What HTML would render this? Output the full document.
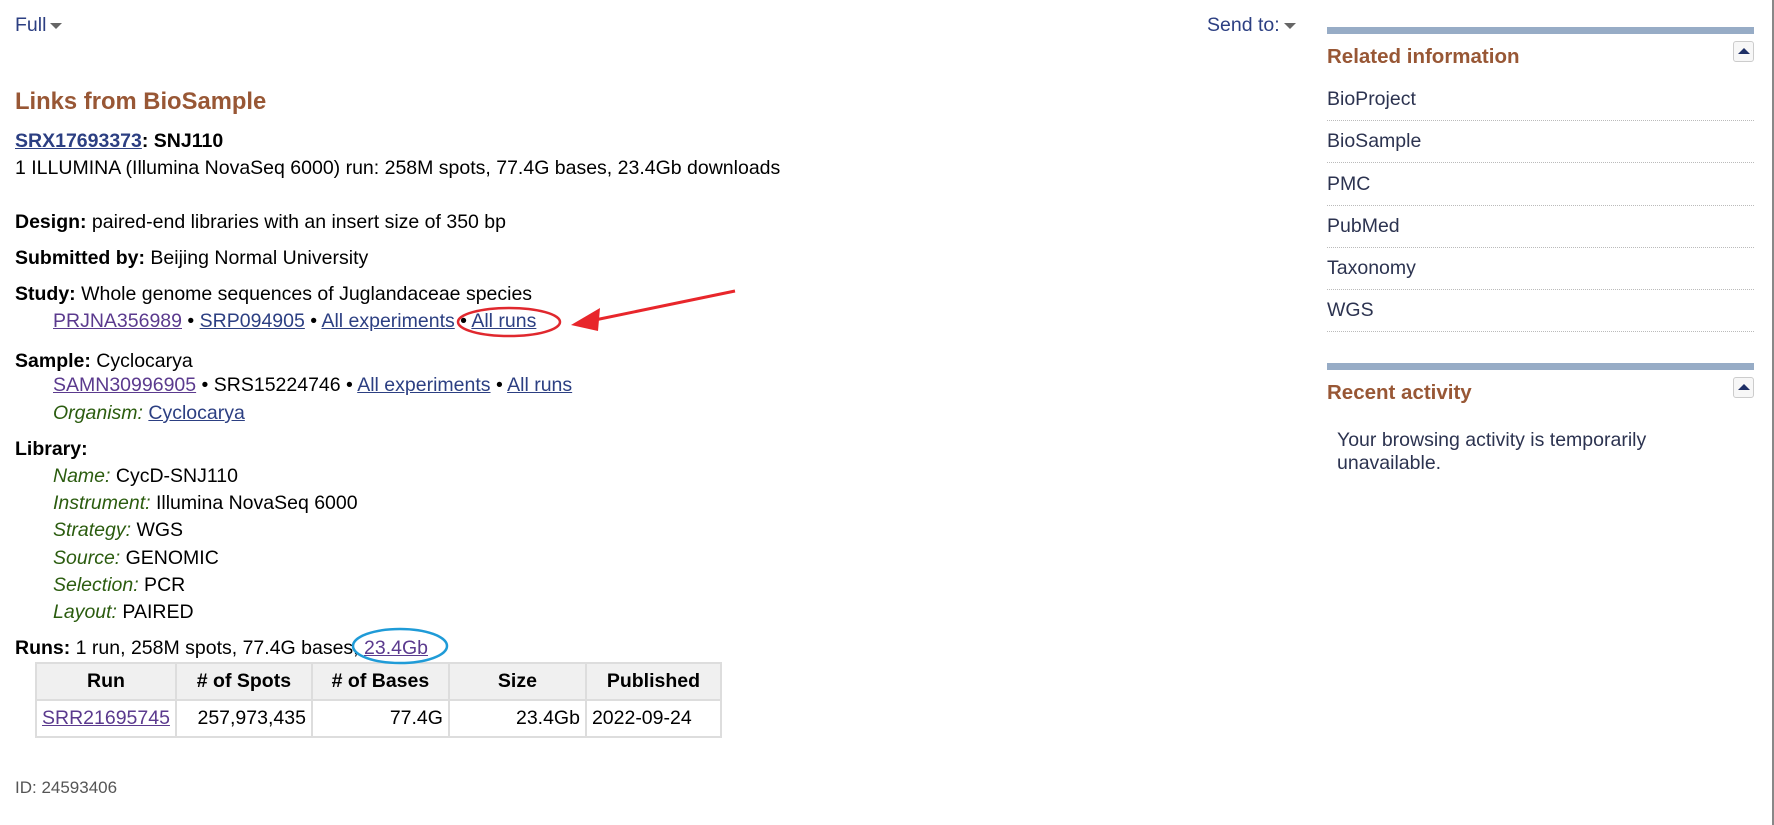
<!DOCTYPE html>
<html><head><meta charset="utf-8"><style>
*{margin:0;padding:0;box-sizing:border-box}
body{width:1774px;height:825px;background:#fff;font-family:"Liberation Sans",Arial,sans-serif;font-size:19.5px;color:#000;position:relative;overflow:hidden}
.a{position:absolute;white-space:nowrap}
a{color:#2c3f82;text-decoration:underline}
a.v{color:#5b3a8e}
.nav{color:#2c3f82}
.tri{display:inline-block;width:0;height:0;border-left:6px solid transparent;border-right:6px solid transparent;border-top:6px solid #666;vertical-align:middle;margin-left:4px}
h2{font-size:23.8px;color:#985735;font-weight:bold}
i{color:#2b5c0f}
b{font-weight:bold}
table{border-collapse:collapse;position:absolute;left:35px;top:662px}
td,th{border:2px solid #ddd;height:37px;padding:0 5px}
th{background:#f0f0f0;font-weight:bold;text-align:center}
.side{position:absolute;left:1327px;width:427px}
.bar{height:7px;background:#97acc6}
.sh{color:#985735;font-weight:bold;font-size:20.5px}
.btn{position:absolute;right:0;width:21px;height:21px;border:1px solid #ccc;border-radius:3px;background:#f7f7f7}
.btn:after{content:"";position:absolute;left:4px;top:6px;border-left:6px solid transparent;border-right:6px solid transparent;border-bottom:6px solid #1e2f66}
.item{position:absolute;left:0;width:427px;border-bottom:1px dotted #bbb;height:42px;color:#2c3350}
</style></head><body>
<div class="a nav" style="left:15px;top:14px">Full<span class="tri"></span></div>
<div class="a nav" style="left:1207px;top:14px">Send to:<span class="tri"></span></div>
<div style="position:absolute;right:0;top:0;width:2px;height:825px;background:#888"></div>

<h2 class="a" style="left:15px;top:88px">Links from BioSample</h2>
<div class="a" style="left:15px;top:130px"><b><a href="#">SRX17693373</a>: SNJ110</b></div>
<div class="a" style="left:15px;top:157px">1 ILLUMINA (Illumina NovaSeq 6000) run: 258M spots, 77.4G bases, 23.4Gb downloads</div>
<div class="a" style="left:15px;top:211px"><b>Design:</b> paired-end libraries with an insert size of 350 bp</div>
<div class="a" style="left:15px;top:247px"><b>Submitted by:</b> Beijing Normal University</div>
<div class="a" style="left:15px;top:283px"><b>Study:</b> Whole genome sequences of Juglandaceae species</div>
<div class="a" style="left:53px;top:310px"><a class="v" href="#">PRJNA356989</a> • <a href="#">SRP094905</a> • <a href="#">All experiments</a> • <a href="#">All runs</a></div>
<div class="a" style="left:15px;top:350px"><b>Sample:</b> Cyclocarya</div>
<div class="a" style="left:53px;top:374px"><a class="v" href="#">SAMN30996905</a> • SRS15224746 • <a href="#">All experiments</a> • <a href="#">All runs</a></div>
<div class="a" style="left:53px;top:402px"><i>Organism:</i> <a href="#">Cyclocarya</a></div>
<div class="a" style="left:15px;top:438px"><b>Library:</b></div>
<div class="a" style="left:53px;top:465px"><i>Name:</i> CycD-SNJ110</div>
<div class="a" style="left:53px;top:492px"><i>Instrument:</i> Illumina NovaSeq 6000</div>
<div class="a" style="left:53px;top:519px"><i>Strategy:</i> WGS</div>
<div class="a" style="left:53px;top:547px"><i>Source:</i> GENOMIC</div>
<div class="a" style="left:53px;top:574px"><i>Selection:</i> PCR</div>
<div class="a" style="left:53px;top:601px"><i>Layout:</i> PAIRED</div>
<div class="a" style="left:15px;top:637px"><b>Runs:</b> 1 run, 258M spots, 77.4G bases, <a class="v" href="#">23.4Gb</a></div>
<table>
<tr><th style="width:137px">Run</th><th style="width:136px"># of Spots</th><th style="width:137px"># of Bases</th><th style="width:137px">Size</th><th style="width:135px">Published</th></tr>
<tr><td><a class="v" href="#">SRR21695745</a></td><td style="text-align:right">257,973,435</td><td style="text-align:right">77.4G</td><td style="text-align:right">23.4Gb</td><td>2022-09-24</td></tr>
</table>
<div class="a" style="left:15px;top:778px;font-size:17px;color:#555">ID: 24593406</div>

<svg style="position:absolute;left:0;top:0" width="1774" height="825">
<ellipse cx="509" cy="322" rx="51" ry="14" fill="none" stroke="#e0282e" stroke-width="2.5"/>
<line x1="735" y1="291" x2="590" y2="321" stroke="#e8262b" stroke-width="3"/>
<polygon points="571,325 600,308 598,331" fill="#e8262b"/>
<ellipse cx="400" cy="646" rx="47" ry="17" fill="none" stroke="#1f9bd7" stroke-width="2.5"/>
</svg>

<div class="side" style="top:27px">
 <div class="bar"></div>
 <div class="btn" style="top:14px"></div>
 <div class="sh" style="position:absolute;top:18px">Related information</div>
 <div class="item" style="top:52px"><div style="padding-top:9px">BioProject</div></div>
 <div class="item" style="top:94px"><div style="padding-top:9px">BioSample</div></div>
 <div class="item" style="top:137px"><div style="padding-top:9px">PMC</div></div>
 <div class="item" style="top:179px"><div style="padding-top:9px">PubMed</div></div>
 <div class="item" style="top:221px"><div style="padding-top:9px">Taxonomy</div></div>
 <div class="item" style="top:263px"><div style="padding-top:9px">WGS</div></div>
</div>
<div class="side" style="top:363px">
 <div class="bar"></div>
 <div class="btn" style="top:14px"></div>
 <div class="sh" style="position:absolute;top:18px">Recent activity</div>
 <div style="position:absolute;top:66px;left:10px;color:#2c3350;line-height:23px">Your browsing activity is temporarily<br>unavailable.</div>
</div>
</body></html>
